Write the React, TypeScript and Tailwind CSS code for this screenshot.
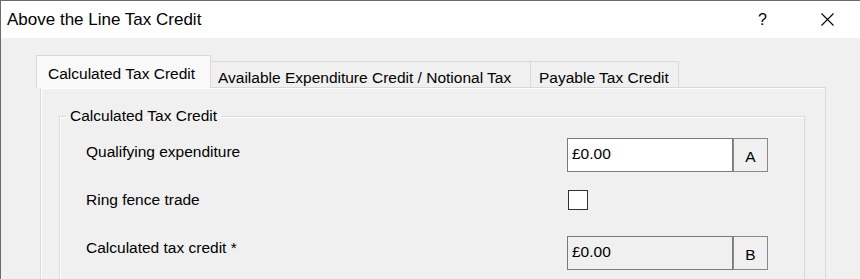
import React from 'react';

const font = { fontFamily: '"Liberation Sans", Arial, sans-serif' };

function Field({ value, tag, readOnly }: { value: string; tag: string; readOnly?: boolean }) {
  return (
    <div className="flex h-[34px]">
      <div
        className={`w-[166px] h-full border border-[#7a7a7a] pl-[4px] pt-[6px] text-[15.5px] leading-[18px] text-black ${
          readOnly ? 'bg-[#f0f0f0]' : 'bg-white'
        }`}
      >
        {value}
      </div>
      <div className="w-[35px] h-full border border-[#8a8a8a] bg-[#f0f0f0] flex items-center justify-center pt-[3px] text-[15.5px] text-black">
        {tag}
      </div>
    </div>
  );
}

export default function App() {
  return (
    <div
      className="w-[860px] h-[279px] overflow-hidden bg-[#f0f0f0] border-l border-t border-[#6b6b6b] flex flex-col"
      style={font}
    >
      {/* title bar */}
      <div className="h-[37px] shrink-0 bg-white flex items-center pl-[6px] pr-[26px]">
        <span className="text-[17px] text-black">Above the Line Tax Credit</span>
        <div className="ml-auto flex items-center gap-[54px]">
          <span className="text-[16px] text-black">?</span>
          <svg width="13" height="13" viewBox="0 0 13 13" className="text-black">
            <path d="M0.5 0.5 L12.5 12.5 M12.5 0.5 L0.5 12.5" stroke="currentColor" strokeWidth="1.1" />
          </svg>
        </div>
      </div>

      {/* body */}
      <div className="flex-1 pl-[35px] pr-[34px] pt-[17px]">
        {/* tabs */}
        <div className="flex items-end relative z-10 -mb-px">
          <div className="h-[33px] w-[175px] border border-b-0 border-[#d9d9d9] bg-[#f9f9f9] pl-[11px] pt-[6px] text-[15.5px] text-black whitespace-nowrap">
            Calculated Tax Credit
          </div>
          <div className="h-[27px] w-[320px] border border-l-0 border-[#d9d9d9] bg-[#f0f0f0] pl-[7px] pt-[4px] text-[15.5px] text-black whitespace-nowrap">
            Available Expenditure Credit / Notional Tax
          </div>
          <div className="h-[27px] w-[148px] border border-l-0 border-[#d9d9d9] bg-[#f0f0f0] pl-[8px] pt-[4px] text-[15.5px] text-black whitespace-nowrap">
            Payable Tax Credit
          </div>
        </div>

        {/* tab panel */}
        <div className="ml-[4px] w-[786px] h-[200px] border border-[#d9d9d9] shadow-[inset_1px_1px_0_#ffffff] bg-[#f0f0f0] pl-[18px] pr-[20px] pt-[19px]">
          <fieldset className="border border-[#d9d9d9] shadow-[inset_1px_1px_0_#ffffff] h-[200px] pl-[6px] pt-[13px]">
            <legend className="px-[4px] text-[15.5px] leading-[18px] text-black">Calculated Tax Credit</legend>

            <div className="pl-[20px]">
              <div className="flex items-start">
                <div className="w-[481px] pt-[5px] text-[15.5px] leading-[18px] text-black">Qualifying expenditure</div>
                <Field value="£0.00" tag="A" />
              </div>

              <div className="flex items-center mt-[18px] h-[20px]">
                <div className="w-[482px] text-[15.5px] leading-[18px] text-black">Ring fence trade</div>
                <div className="w-[20px] h-[20px] bg-white border-[1.5px] border-[#333333]" />
              </div>

              <div className="flex items-start mt-[26px]">
                <div className="w-[481px] pt-[3px] text-[15.5px] leading-[18px] text-black">Calculated tax credit *</div>
                <Field value="£0.00" tag="B" readOnly />
              </div>
            </div>
          </fieldset>
        </div>
      </div>
    </div>
  );
}
